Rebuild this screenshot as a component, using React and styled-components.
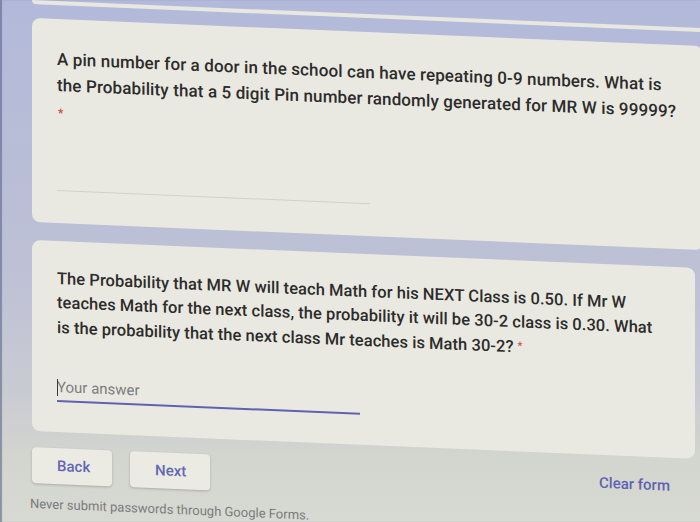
import React from "react";
import styled, { createGlobalStyle } from "styled-components";

const GlobalStyle = createGlobalStyle`
  html, body { margin: 0; padding: 0; }
  body {
    width: 700px;
    height: 522px;
    overflow: hidden;
    background: linear-gradient(180deg, #b3b9da 0%, #b8bdd7 30%, #bfc2d5 55%, #c9cbd2 75%, #d3d5cf 88%, #d7d9d2 100%);
    font-family: Roboto, "Noto Sans", Arial, sans-serif;
  }
`;

const Page = styled.div`
  width: 700px;
  height: 522px;
  overflow: hidden;
  box-shadow: inset 2px 0 1px rgba(80, 90, 130, 0.55);
`;

const Sheet = styled.div`
  transform: skewY(2.4deg);
  transform-origin: 0 0;
  margin-left: 32px;
  width: 663px;
  display: flex;
  flex-direction: column;
`;

const PrevCard = styled.div`
  height: 4px;
  margin-right: -40px;
  background: #e8e7e0;
  border-radius: 0 0 0 8px;
`;

const Card = styled.section`
  margin-top: ${(p) => p.$top}px;
  margin-right: ${(p) => p.$overflow}px;
  background: #eae9e1;
  border-radius: 8px;
  padding: ${(p) => p.$padTop}px 24px ${(p) => p.$padBottom}px 25px;
`;

const Title = styled.div`
  font-size: ${(p) => p.$size}px;
  line-height: ${(p) => p.$lh}px;
  font-weight: 500;
  color: #2c2c2c;
  white-space: nowrap;
  letter-spacing: ${(p) => p.$track}px;
`;

const Star = styled.span`
  color: #c9473c;
  font-size: ${(p) => p.$size}px;
  vertical-align: ${(p) => (p.$raised ? "3px" : "0")};
  margin-left: ${(p) => (p.$raised ? "4px" : "1px")};
`;

const BlankLine = styled.div`
  margin-top: 44px;
  width: 313px;
  height: 20px;
  border-bottom: 1px solid #d0d0cc;
`;

const AnswerField = styled.div`
  position: relative;
  margin-top: 37px;
  width: 303px;
  padding-bottom: 3px;
  border-bottom: 2px solid #5e62b0;
  font-size: 15px;
  line-height: 20px;
  color: #7d7d7f;
  &::before {
    content: "";
    position: absolute;
    left: 0;
    top: 2px;
    width: 1px;
    height: 17px;
    background: #3a3a3a;
  }
`;

const ActionRow = styled.div`
  margin-top: 16px;
  display: flex;
  align-items: center;
  gap: 18px;
`;

const NavButton = styled.button`
  width: 80px;
  height: 36px;
  border: none;
  border-radius: 4px;
  background: #ebebe4;
  box-shadow: 0 1px 2px rgba(60, 60, 60, 0.18), 0 1px 3px rgba(60, 60, 60, 0.1);
  color: #6366b6;
  font-family: inherit;
  font-size: 15px;
  font-weight: 500;
  text-align: left;
  padding: 0 0 0 25px;
`;

const ClearLink = styled.span`
  margin-left: auto;
  margin-right: 25px;
  margin-bottom: 12px;
  color: #5f63b4;
  font-size: 15px;
  font-weight: 500;
`;

const Footer = styled.div`
  margin-top: 13px;
  margin-left: -2px;
  font-size: 13px;
  line-height: 16px;
  color: #7a7c80;
`;

export default function App() {
  return (
    <Page>
      <GlobalStyle />
      <Sheet>
        <PrevCard />
        <Card $top={14} $overflow={-8} $padTop={27} $padBottom={32}>
          <Title $size={17} $lh={26} $track={0.12}>
            A pin number for a door in the school can have repeating 0-9 numbers. What is
            <br />
            the Probability that a 5 digit Pin number randomly generated for MR W is 99999?
            <br />
            <Star $size={12}>*</Star>
          </Title>
          <BlankLine />
        </Card>
        <Card $top={18} $overflow={0} $padTop={26} $padBottom={30}>
          <Title $size={16.5} $lh={24} $track={0.05}>
            The Probability that MR W will teach Math for his NEXT Class is 0.50. If Mr W
            <br />
            teaches Math for the next class, the probability it will be 30-2 class is 0.30. What
            <br />
            is the probability that the next class Mr teaches is Math 30-2?
            <Star $size={11} $raised>*</Star>
          </Title>
          <AnswerField>Your answer</AnswerField>
        </Card>
        <ActionRow>
          <NavButton>Back</NavButton>
          <NavButton>Next</NavButton>
          <ClearLink>Clear form</ClearLink>
        </ActionRow>
        <Footer>Never submit passwords through Google Forms.</Footer>
      </Sheet>
    </Page>
  );
}
